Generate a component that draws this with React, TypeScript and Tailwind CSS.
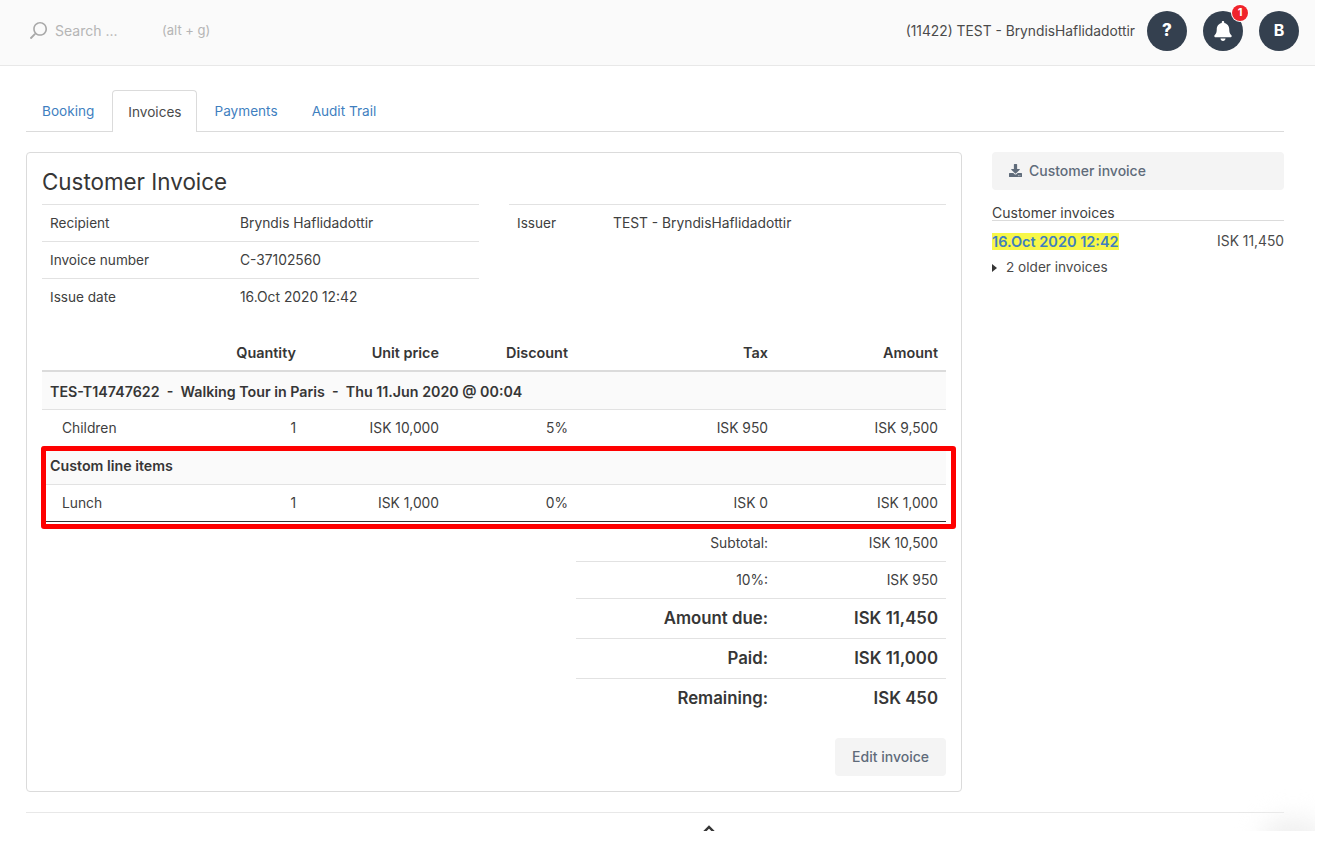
import React from 'react';

const itemCols = ['w-[150px]', 'w-[112px]', 'w-[143px]', 'w-[129px]', 'w-[200px]', 'w-[170px]'];

function InfoRow({ label, value, labelWidth }: { label: string; value: string; labelWidth: string }) {
  return (
    <div className="flex h-[37px] items-center border-t border-[#e2e2e2] px-2">
      <div className={`text-[13.6px] ${labelWidth}`}>{label}</div>
      <div>{value}</div>
    </div>
  );
}

function LineItem({ cells }: { cells: string[] }) {
  return (
    <tr className="h-[37px]">
      <td className="pl-5 pt-[1px]">{cells[0]}</td>
      {cells.slice(1).map((c, i) => (
        <td key={i} className="pr-2 pt-[1px] text-right">{c}</td>
      ))}
    </tr>
  );
}

function TotalRow({ label, value, big, height }: { label: string; value: string; big?: boolean; height: string }) {
  return (
    <div className={`flex items-center border-b border-[#e2e2e2] pt-[1px] last:border-b-0 last:pt-0 ${height} ${big ? 'text-[16.8px] font-semibold text-[#363636]' : ''}`}>
      <div className="w-[192px] text-right">{label}</div>
      <div className="w-[170px] text-right">{value}</div>
    </div>
  );
}

export default function App() {
  return (
    <div className="relative h-[831px] w-[1315px] overflow-hidden bg-white font-['Inter',sans-serif] text-[13.8px] text-[#404040]">
      {/* Top bar */}
      <header className="flex h-[66px] items-center justify-between border-b border-[#e8e8e8] bg-[#fafafa] pb-1 pl-[30px] pr-4">
        <div className="flex items-center text-[#b5b5b5]">
          <svg viewBox="0 0 512 512" className="h-[17px] w-[17px]" fill="#a8a8a8">
            <path d="M508.5 468.9L387.1 347.5c-2.3-2.3-5.3-3.5-8.5-3.5h-13.2c31.5-36.5 50.6-84 50.6-136C416 93.1 322.9 0 208 0S0 93.1 0 208s93.1 208 208 208c52 0 99.5-19.1 136-50.6v13.2c0 3.2 1.3 6.2 3.5 8.5l121.4 121.4c4.7 4.7 12.3 4.7 17 0l22.6-22.6c4.7-4.7 4.7-12.3 0-17zM208 368c-88.4 0-160-71.6-160-160S119.6 48 208 48s160 71.6 160 160-71.6 160-160 160z" transform="matrix(-1 0 0 1 512 0)" />
          </svg>
          <span className="ml-2 w-[107px] text-[14px]">Search ...</span>
          <span className="text-[13px]">(alt + g)</span>
        </div>
        <div className="flex items-center">
          <span className="mr-3 mt-[2px] text-[#4a4a4a]">(11422) TEST - BryndisHaflidadottir</span>
          <div className="flex h-10 w-10 items-center justify-center rounded-full bg-[#34404f] text-[17px] font-extrabold text-white">?</div>
          <div className="relative ml-4 flex h-10 w-10 items-center justify-center rounded-full bg-[#34404f]">
            <svg viewBox="0 0 448 512" className="h-[20px] w-[18px]" fill="#fff">
              <path d="M224 512c35.32 0 63.97-28.65 63.97-64H160.03c0 35.35 28.65 64 63.97 64zm215.39-149.71c-19.32-20.76-55.47-51.99-55.47-154.29 0-77.7-54.48-139.9-127.94-155.16V32c0-17.67-14.32-32-31.98-32s-31.98 14.33-31.98 32v20.84C118.56 68.1 64.08 130.3 64.08 208c0 102.3-36.15 133.53-55.47 154.29-6 6.45-8.66 14.16-8.61 21.71.11 16.4 12.98 32 32.1 32h383.8c19.12 0 32-15.6 32.1-32 .05-7.55-2.61-15.27-8.61-21.71z" />
            </svg>
            <span className="absolute -right-[5px] -top-[6px] flex h-4 w-4 items-center justify-center rounded-full bg-[#f0242b] text-[11px] font-bold text-white ring-1 ring-white">1</span>
          </div>
          <div className="ml-4 flex h-10 w-10 items-center justify-center rounded-full bg-[#34404f] pb-[2px] text-[16px] font-bold text-white">B</div>
        </div>
      </header>

      <div className="px-[26px] pr-[31px] pt-6">
        {/* Tabs */}
        <nav className="flex h-[42px] items-end border-b border-[#dbdbdb] text-[13.6px] text-[#3f7fbf]">
          <div className="mr-[2px] flex h-[41px] items-center px-4 pt-[2px]">Booking</div>
          <div className="relative -mb-px flex h-[42px] items-center rounded-t border border-b-0 border-[#dbdbdb] bg-white pl-[15px] pr-[14px] pt-[2px] text-[#4a4a4a]">Invoices</div>
          <div className="flex h-[41px] items-center px-[18px] pt-[2px]">Payments</div>
          <div className="flex h-[41px] items-center px-4 pt-[2px]">Audit Trail</div>
        </nav>

        <div className="mt-5 flex gap-[30px]">
          {/* Invoice card */}
          <main className="h-[640px] w-[936px] rounded border border-[#dbdbdb] px-[15px] pt-[13px]">
            <h1 className="h-[38px] text-[22.4px] leading-[32px] text-[#363636]">Customer Invoice</h1>
            <div className="flex gap-[30px]">
              <div className="w-[437px]">
                <InfoRow label="Recipient" value="Bryndis Haflidadottir" labelWidth="w-[190px]" />
                <InfoRow label="Invoice number" value="C-37102560" labelWidth="w-[190px]" />
                <InfoRow label="Issue date" value="16.Oct 2020 12:42" labelWidth="w-[190px]" />
              </div>
              <div className="w-[437px]">
                <InfoRow label="Issuer" value="TEST - BryndisHaflidadottir" labelWidth="w-[96px]" />
              </div>
            </div>

            <div className="relative mt-[19px]">
              <table className="w-[904px] table-fixed border-collapse">
                <colgroup>
                  {itemCols.map((c) => (
                    <col key={c} className={c} />
                  ))}
                </colgroup>
                <thead>
                  <tr className="h-[37px] border-b-2 border-[#dbdbdb] text-[14.4px] text-[#363636]">
                    <th></th>
                    <th className="pr-2 pt-[2px] text-right font-semibold">Quantity</th>
                    <th className="pr-2 pt-[2px] text-right font-semibold">Unit price</th>
                    <th className="pr-2 pt-[2px] text-right font-semibold">Discount</th>
                    <th className="pr-2 pt-[2px] text-right font-semibold">Tax</th>
                    <th className="pr-2 pt-[2px] text-right font-semibold">Amount</th>
                  </tr>
                </thead>
                <tbody>
                  <tr className="h-[38px] border-b border-[#e2e2e2] bg-[#fafafa] text-[14.25px] font-semibold text-[#363636]">
                    <td colSpan={6} className="whitespace-pre px-2 pt-[2px]">TES-T14747622  -  Walking Tour in Paris  -  Thu 11.Jun 2020 @ 00:04</td>
                  </tr>
                  <LineItem cells={['Children', '1', 'ISK 10,000', '5%', 'ISK 950', 'ISK 9,500']} />
                  <tr className="h-[38px] border-y border-[#e2e2e2] bg-[#fafafa] text-[14.25px] font-semibold text-[#363636]">
                    <td colSpan={6} className="px-2 pt-[2px]">Custom line items</td>
                  </tr>
                  <LineItem cells={['Lunch', '1', 'ISK 1,000', '0%', 'ISK 0', 'ISK 1,000']} />
                </tbody>
              </table>
              <div className="w-[904px] border-t border-[#363636]"></div>
              {/* Red annotation drawn over the custom rows */}
              <div className="absolute -left-px top-[112px] h-[83px] w-[915px] rounded-[3px] border-[5px] border-[#fe0000]"></div>
            </div>

            <div className="ml-[534px] mt-[3px] w-[370px]">
              <TotalRow label="Subtotal:" value="ISK 10,500" height="h-[37px]" />
              <TotalRow label="10%:" value="ISK 950" height="h-[37px]" />
              <TotalRow label="Amount due:" value="ISK 11,450" height="h-[40px]" big />
              <TotalRow label="Paid:" value="ISK 11,000" height="h-[40px]" big />
              <TotalRow label="Remaining:" value="ISK 450" height="h-[40px]" big />
            </div>

            <div className="mt-[19px] flex justify-end">
              <button className="h-[38px] rounded-[4px] bg-[#f4f4f4] px-[17px] pb-[2px] text-[14px] font-medium text-[#5f6b7a]">Edit invoice</button>
            </div>
          </main>

          {/* Sidebar */}
          <aside className="w-[292px]">
            <button className="flex h-[38px] w-full items-center rounded-[4px] bg-[#f4f4f4] pb-[2px] pl-[17px] text-[14px] font-medium text-[#5f6b7a]">
              <svg viewBox="0 0 512 512" className="mr-[7px] h-[13px] w-[13px]" fill="#5f6b7a">
                <path d="M216 0h80c13.3 0 24 10.7 24 24v168h87.7c17.8 0 26.7 21.5 14.1 34.1L269.7 378.3c-7.5 7.5-19.8 7.5-27.3 0L90.1 226.1c-12.6-12.6-3.7-34.1 14.1-34.1H192V24c0-13.3 10.7-24 24-24zm296 376v112c0 13.3-10.7 24-24 24H24c-13.3 0-24-10.7-24-24V376c0-13.3 10.7-24 24-24h146.7l49 49c20.1 20.1 52.5 20.1 72.6 0l49-49H488c13.3 0 24 10.7 24 24zm-124 88c0-11-9-20-20-20s-20 9-20 20 9 20 20 20 20-9 20-20zm64 0c0-11-9-20-20-20s-20 9-20 20 9 20 20 20 20-9 20-20z" />
              </svg>
              Customer invoice
            </button>
            <div className="mt-4 border-b border-[#dbdbdb] text-[14px] leading-[14px]">Customer invoices</div>
            <div className="mt-[11px] flex items-center justify-between leading-[17px]">
              <span className="bg-[#f7f748] text-[14.5px] font-semibold text-[#3f7fbf]">16.Oct 2020 12:42</span>
              <span className="pt-[1px] text-[#4a4a4a]">ISK 11,450</span>
            </div>
            <div className="mt-[9px] flex items-center text-[13.6px] leading-[17px] text-[#4a4a4a]">
              <span className="mr-[9px] h-0 w-0 border-y-[4px] border-l-[5px] border-y-transparent border-l-[#363636]"></span>
              2 older invoices
            </div>
          </aside>
        </div>

        <footer className="relative mt-5 h-5 border-t border-[#e8e8e8]">
          <svg viewBox="0 0 14 12" className="absolute left-[676px] top-[11px] h-[12px] w-[14px]" fill="none" stroke="#363636" strokeWidth="2.4">
            <path d="M2 8l5-5 5 5" />
          </svg>
        </footer>
      </div>

      {/* Soft shadow of the chat widget clipped by the page edge */}
      <div className="absolute right-[-10px] top-[818px] h-12 w-16 rounded-full bg-[#f0f0f0] blur-md"></div>
    </div>
  );
}
